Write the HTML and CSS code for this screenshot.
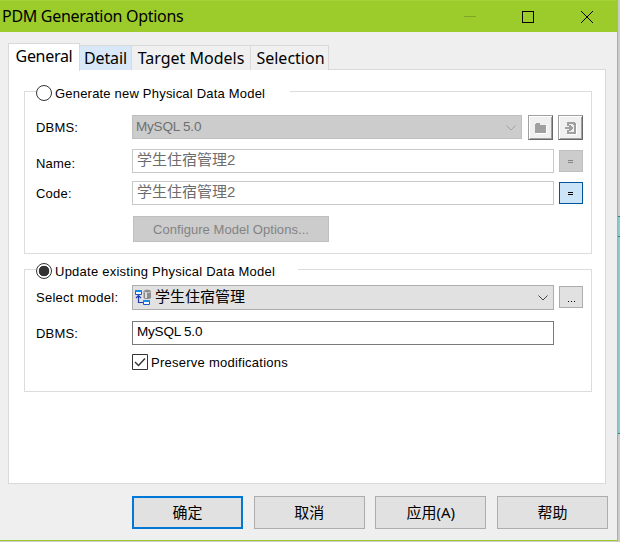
FILE: index.html
```html
<!DOCTYPE html>
<html lang="zh-CN">
<head>
<meta charset="utf-8">
<title>PDM Generation Options</title>
<link rel="stylesheet" href="styles.css">
</head>
<body>
<div class="desktop">
<main class="window">
  <header class="titlebar">
    <h1>PDM Generation Options</h1>
    <svg class="winicons" width="153" height="31" viewBox="0 0 153 31" shape-rendering="crispEdges">
      <path d="M0 16.5h12" stroke="#7fa625"/>
      <path d="M58.5 11.5h11v11h-11z" fill="none" stroke="#000"/>
      <path d="M117 11l12 12M129 11l-12 12" stroke="#000" shape-rendering="auto"/>
    </svg>
  </header>
  <nav class="tabs">
    <div class="tab active">General</div>
    <div class="tab hover">Detail</div>
    <div class="tab target">Target Models</div>
    <div class="tab selection">Selection</div>
  </nav>
  <section class="panel">
    <div class="group create">
      <div class="legend"><i class="radio"></i><span>Generate new Physical Data Model</span></div>
      <div class="row r-dbms">
        <label>DBMS:</label>
        <div class="field select disabled short"><span class="mysql">MySQL 5.0</span>
          <svg class="chev" width="10" height="6" viewBox="0 0 10 6"><path d="M.5.5L5 5 9.5.5" fill="none" stroke="#a3a3a3"/></svg></div>
        <div class="tool"><svg width="15" height="15" viewBox="0 0 15 15" shape-rendering="crispEdges"><path d="M3 13h10V6h1v8H3z" fill="#fff"/><path d="M2 4l1-1h3l1 1v1h5l1 1v7H2z" fill="#a0a0a0"/></svg></div>
        <div class="tool second"><svg width="15" height="15" viewBox="0 0 15 15" shape-rendering="crispEdges"><path d="M5 14h8V4h1v11H5z" fill="#fff"/><path d="M4 2h7l2 2v10H4v-4h2v2h5V5h-1V4H6v2H4z" fill="#a0a0a0"/><path d="M2 7h4V5h1l3 3-3 3H6V9H2z" fill="#a0a0a0"/></svg></div>
      </div>
      <div class="row r-name"><label>Name:</label><div class="field input"><span class="cjk">学生住宿管理2</span></div><div class="mini disabled"><i class="eq"></i></div></div>
      <div class="row r-code"><label>Code:</label><div class="field input"><span class="cjk">学生住宿管理2</span></div><div class="mini focus"><i class="eq"></i></div></div>
      <div class="configure">Configure Model Options...</div>
    </div>
    <div class="group update">
      <div class="legend"><i class="radio on"></i><span>Update existing Physical Data Model</span></div>
      <div class="row r-model">
        <label>Select model:</label>
        <div class="field select"><svg class="model" width="17" height="17" viewBox="0 0 17 17">
          <path d="M8.500 2.500c0-2.500 7.500-2.500 7.500 0v6c0 2-7.500 2-7.500 0z" fill="#8c8c8c"/><path d="M10 3v6h2V3z" fill="#dedede"/><path d="M9 2.500c0 1.500 7 1.500 7 0" fill="none" stroke="#ccc"/>
          <path d="M.5 1.500h6v4h-6zM8.500 11.500h6v4h-6z" fill="#f5fcff" stroke="#2355cd"/>
          <path d="M0 1h7v2H0zM8 11h7v2H8z" fill="#168ce8"/><path d="M3.500 6v7.500H8M1 9l2.500-2.500L6 9" fill="none" stroke="#203bae" stroke-width="1.200"/></svg><span class="cjk">学生住宿管理</span>
          <svg class="chev" width="10" height="6" viewBox="0 0 10 6"><path d="M.5.5L5 5 9.500.5" fill="none" stroke="#444"/></svg></div>
        <div class="mini dots"><i></i><i></i><i></i></div>
      </div>
      <div class="row r-db2"><label>DBMS:</label><div class="field input strong"><span class="mysql">MySQL 5.0</span></div></div>
      <div class="check"><svg width="16" height="16" viewBox="0 0 16 16"><path d="M.5.5h15v15H.5z" fill="#fff" stroke="#333"/><path d="M3 8l3.500 3.500L13 4.500" fill="none" stroke="#333" stroke-width="1.400"/></svg><span>Preserve modifications</span></div>
    </div>
  </section>
  <footer class="actions">
    <div class="btn primary">确定</div><div class="btn">取消</div><div class="btn apply">应用(A)</div><div class="btn">帮助</div>
  </footer>
</main>
<aside class="backdrop"><div class="behind"></div></aside>
</div>
</body>
</html>
```

FILE: styles.css
```css
* { box-sizing: border-box; }
body { margin: 0; width: 620px; height: 542px; overflow: hidden; background: #ccc; color: #000; font: 13px/16px "Liberation Sans", "Noto Sans CJK SC", sans-serif; }
.desktop { display: flex; height: 542px; }
.window { width: 618px; height: 541px; background: #efefef; border-right: 1px solid #9ccc2c; border-bottom: 1px solid #9ccc2c; }
.titlebar { display: flex; justify-content: space-between; height: 32px; background: #9ccc2c; border-top: 1px solid #a4d038; }
h1 { margin: 0 0 0 2px; font: 16px/31px "Noto Sans", sans-serif; letter-spacing: -.3px; white-space: nowrap; }
.winicons { margin: -1px 0 0; }
.tabs { display: flex; align-items: flex-end; height: 37px; margin: 1px 0 0 8px; }
.tab { height: 25px; border: 1px solid #d9d9d9; border-width: 1px 1px 0 0; background: #f0f0f0; font: 16px/24px "Noto Sans", sans-serif; text-align: center; white-space: nowrap; }
.tab.active { width: 72px; height: 28px; margin-bottom: -1px; background: #fff; border-left-width: 1px; z-index: 1; letter-spacing: -.3px; }
.tab.hover { width: 52px; background: #d8e8f8; letter-spacing: -.15px; }
.tab.target { width: 119px; }
.tab.selection { width: 78px; padding-left: 2px; }
.panel { width: 598px; height: 415px; margin: -1px 0 0 8px; padding: 21px 13px 0 15px; border: 1px solid #d9d9d9; background: #fff; }
.group { width: 568px; border: 1px solid #dcdcdc; padding-left: 11px; }
.create { height: 163px; }
.update { height: 123px; margin-top: 15px; }
.legend { display: flex; align-items: center; gap: 3px; width: 254px; height: 18px; margin-top: -8px; background: #fff; white-space: nowrap; letter-spacing: .2px; }
.legend span { padding-top: 1px; }
.update .legend { width: 262px; letter-spacing: .24px; }
.radio { flex: none; width: 16px; height: 16px; border: 1px solid #333; border-radius: 50%; }
.radio.on { background: radial-gradient(circle, #333 0 5px, #fff 5.6px); }
.row { display: flex; align-items: center; height: 24px; }
.row label { width: 96px; white-space: nowrap; letter-spacing: .2px; }
.r-dbms { margin-top: 13px; height: 25px; align-items: flex-start; }
.r-dbms label { margin-top: 5px; }
.r-name { margin-top: 9px; }
.r-code { margin-top: 8px; }
.r-name label { padding-top: 5px; }
.r-code label { padding-top: 2px; }
.field { display: flex; align-items: center; width: 422px; height: 24px; border: 1px solid #c8c8c8; background: #fff; padding-left: 4px; white-space: nowrap; }
.short { width: 390px; padding-left: 3px; }
.select { background: #e1e1e1; border-color: #adadad; }
.select.disabled { background: #ccc; border-color: #bfbfbf; color: #6f6f6f; }
.field.strong { border-color: #7a7a7a; }
.chev { margin: 1px 5px 0 auto; }
.cjk { font-size: 15px; line-height: 20px; }
.input .cjk { color: #6d6d6d; margin-top: -3px; }
.mysql { font-size: 13.5px; letter-spacing: -.2px; }
.strong .mysql { margin-top: -2px; }
.tool { flex: none; width: 25px; height: 25px; margin-left: 6px; padding: 4px; border: 1px solid; border-color: #a0a0a0 #696969 #696969 #a0a0a0; background: #f0f0f0; box-shadow: inset 1px 1px #fff, inset -1px -1px #a0a0a0; }
.tool.second { margin-left: 5px; }
.tool svg { display: block; }
.mini { display: flex; flex-direction: column; align-items: center; justify-content: center; width: 24px; height: 22px; margin-left: 5px; border: 1px solid #adadad; background: #e1e1e1; }
.mini.disabled { background: #ccc; border-color: #bfbfbf; color: #838383; }
.mini.focus { background: #cce4f7; border-color: #005499; }
.eq { width: 5px; height: 3px; margin: 1px 1px 0 0; border: solid currentColor; border-width: 1px 0; }
.mini.dots { flex-direction: row; align-items: flex-end; gap: 2px; padding-bottom: 5px; }
.dots i { width: 1px; height: 1px; background: #000; }
.configure { width: 196px; height: 26px; margin: 11px 0 0 97px; border: 1px solid #bfbfbf; background: #ccc; color: #838383; line-height: 25px; text-align: center; white-space: nowrap; letter-spacing: .05px; }
.r-model { margin-top: 5px; height: 25px; }
.r-model label { letter-spacing: .27px; }
.r-model .field { height: 25px; padding-left: 2px; }
.r-model .cjk { margin-top: -2px; }
.r-model .mini { margin-top: -1px; }
.model { margin-right: 3px; }
.r-db2 { margin-top: 11px; }
.r-db2 label { padding-top: 1px; }
.check { display: flex; align-items: center; gap: 3px; margin: 9px 0 0 96px; height: 16px; letter-spacing: .25px; }
.check span { padding-top: 1px; }
.actions { display: flex; justify-content: space-between; width: 476px; margin: 12px 0 0 132px; }
.btn { width: 111px; height: 33px; border: 1px solid #adadad; background: #e1e1e1; font: 15px/31px "Noto Sans", "Noto Sans CJK SC", sans-serif; text-align: center; }
.btn.primary { border: 2px solid #0078d7; line-height: 29px; }
.backdrop { width: 2px; height: 542px; padding-top: 216px; background: #ccc; }
.behind { height: 218px; border: solid #218486; border-width: 1px 0; background: linear-gradient(#8ccbc9 19px, #218486 19px 20px, #8ccbc9 20px); }
```
